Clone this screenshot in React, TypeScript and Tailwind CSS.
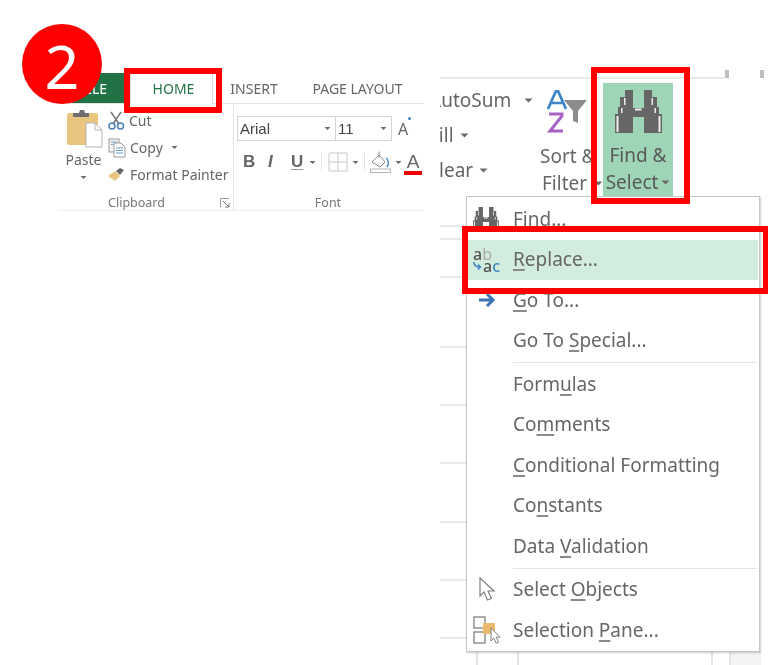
import React from "react";

const Caret = ({ className = "" }: { className?: string }) => (
  <svg width="9" height="5" viewBox="0 0 9 5" className={className}>
    <path d="M0.5 0.5h8L4.5 4.5z" fill="#6a6a6a" />
  </svg>
);

const Binoculars = ({ w, h }: { w: number; h: number }) => (
  <svg width={w} height={h} viewBox="0 0 47 43">
    <path d="M10 0H18V18H29V0H37V7H42V17H44V24H47V43H29V27H18V43H0V24H3V17H5V7H10Z" fill="#666" />
    <path d="M1.500 26h2v16h-2zM6 18h1.500v5H6zM9 8h1.500v7H9zM43.500 26h2v16h-2zM39.500 18h1.500v5h-1.500zM36.500 8h1.500v7h-1.500zM20 18.500h6.500v2H20z" fill="#eeeeee" />
  </svg>
);

const MenuRow = ({ icon, children, active }: { icon?: React.ReactNode; children: React.ReactNode; active?: boolean }) => (
  <div className={`flex h-[40.5px] items-center ${active ? "bg-[#d2ecde]" : ""}`}>
    <div className="flex w-[45px] shrink-0 items-center justify-start">{icon}</div>
    <span className="text-[19px] leading-none text-[#666666]">{children}</span>
  </div>
);

const Sep = () => <div className="ml-[45px] mr-[1px] my-[1px] h-[1px] bg-[#e3e3e3]" />;
const U = ({ children }: { children: React.ReactNode }) => (
  <span className="underline decoration-[#8a8a8a] decoration-[1.500px] underline-offset-[3px]">{children}</span>
);

export default function App() {
  return (
    <div
      className="relative h-[665px] w-[768px] overflow-hidden bg-white text-[#666666] blur-[0.4px]"
      style={{ fontFamily: '"Noto Sans", "Open Sans", sans-serif' }}
    >
      {/* sheet grid lines */}
      <svg className="absolute left-0 top-0" width="768" height="665" viewBox="0 0 768 665">
        <g stroke="#d4d4d4" strokeWidth="1.200">
          <path d="M440 78H725M440 226H470M440 239H470M440 277H470M440 347H470M440 405H470M440 463H470M440 522H470M440 580H470M440 638H470" />
          <path d="M477 650V665M518 650V665M712 650V665M730 650V665M747 650V665" />
        </g>
        <rect x="725" y="70" width="4" height="8" fill="#bdbdbd" />
        <rect x="760" y="70" width="4" height="8" fill="#bdbdbd" />
        <rect x="731" y="650" width="30" height="15" fill="#f3f3f3" />
      </svg>

      <div className="flex pt-[73px]">
        {/* left part of the ribbon */}
        <div className="ml-[58px] w-[366px] shrink-0">
          <div className="flex h-[31px] items-stretch border-b border-[#e4e4e4] pl-[14px] text-[14px]">
            <div className="flex w-[58px] items-center justify-start bg-[#217346] pl-[8px] text-white">FILE</div>
            <div className="mb-[-1px] flex w-[83px] items-center justify-center border-x border-[#dcdcdc] bg-white pl-[4px] text-[#217346]">HOME</div>
            <div className="flex w-[82px] items-center justify-center">INSERT</div>
            <div className="flex w-[110px] items-center justify-center whitespace-nowrap pl-[15px]">PAGE LAYOUT</div>
          </div>

          <div className="flex h-[107px] border-b border-[#eeeeee]">
            {/* Clipboard */}
            <div className="flex w-[176px] shrink-0 flex-col border-r border-[#e4e4e4]">
              <div className="flex flex-1">
                <div className="flex w-[50px] shrink-0 flex-col items-center pl-[1px] pt-[6px]">
                  <svg className="ml-[2px]" width="36" height="38" viewBox="0 0 36 38">
                    <rect x="0" y="3" width="31" height="32" rx="2" fill="#e9c57f" />
                    <path d="M6 3h6l1-3h4l1 3h4v4H6z" fill="#6e6e6e" />
                    <path d="M19 13h9l7 7v17H19z" fill="#fff" stroke="#b5b5b5" />
                    <path d="M28 13v7h7" fill="none" stroke="#b5b5b5" />
                  </svg>
                  <div className="mt-[2px] text-[14px] leading-[20px]">Paste</div>
                  <Caret className="mt-[5px] scale-75" />
                </div>
                <div className="flex flex-col gap-[6px] pt-[6px] text-[14px] leading-[21px]">
                  <div className="flex items-center gap-[4px]">
                    <svg width="17" height="19" viewBox="0 0 17 19">
                      <path d="M3 1l8 12M13 1L5 13" stroke="#777" strokeWidth="1.500" fill="none" />
                      <circle cx="4" cy="15" r="3" fill="none" stroke="#4a7fb8" strokeWidth="1.500" />
                      <circle cx="12.500" cy="15" r="3" fill="none" stroke="#4a7fb8" strokeWidth="1.500" />
                    </svg>
                    <span>Cut</span>
                  </div>
                  <div className="flex items-center gap-[4px]">
                    <svg width="18" height="20" viewBox="0 0 18 20">
                      <rect x="1" y="1" width="10" height="13" fill="#f5f5f5" stroke="#9a9a9a" />
                      <path d="M6 5h7l4 4v10H6z" fill="#fff" stroke="#9a9a9a" />
                      <path d="M3 4h6M3 6.500h2M8 10h7M8 12.500h7M8 15h7" stroke="#6f9bcb" />
                    </svg>
                    <span>Copy</span>
                    <Caret className="ml-[3px] scale-75" />
                  </div>
                  <div className="flex items-center gap-[5px] whitespace-nowrap">
                    <svg width="17" height="15" viewBox="0 0 17 15">
                      <path d="M0 9l7-5 5 5-5 5z" fill="#e9c57f" />
                      <path d="M8 4l4-3 4 2-4 5z" fill="#666" />
                    </svg>
                    <span>Format Painter</span>
                  </div>
                </div>
              </div>
              <div className="relative mb-[-2px] pr-[18px] text-center text-[12.500px] leading-[18px] text-[#777777]">
                Clipboard
                <svg className="absolute right-[3px] top-[4px]" width="10" height="10" viewBox="0 0 10 10">
                  <path d="M0.500 9V0.500H9" fill="none" stroke="#999" />
                  <path d="M3 3l5.500 5.500M5 9h4V5" fill="none" stroke="#777" />
                </svg>
              </div>
            </div>
            {/* Font */}
            <div className="flex flex-1 flex-col pl-[3px]">
              <div className="flex flex-1 flex-col pt-[12px]">
                <div className="flex items-center">
                  <div className="flex h-[25px] w-[99px] items-center justify-between border border-[#d4d4d4] pl-[2px] pr-[3px] text-[15px] text-[#444444]">
                    <span className="pt-[1px]" style={{ fontFamily: '"Liberation Sans", sans-serif' }}>Arial</span>
                    <Caret className="scale-75" />
                  </div>
                  <div className="flex h-[25px] w-[56px] items-center justify-between border border-l-0 border-[#d4d4d4] pl-[2px] pr-[3px] text-[15px] text-[#444444]">
                    <span className="pt-[1px]" style={{ fontFamily: '"Liberation Sans", sans-serif' }}>11</span>
                    <Caret className="scale-75" />
                  </div>
                  <span className="relative ml-[6px] text-[16px]">
                    A
                    <span className="absolute right-[-3px] top-[0px] h-[3px] w-[3px] rounded-full bg-[#4a7fb8]" />
                  </span>
                </div>
                <div className="mt-[9px] flex items-center pl-[6px] text-[17px] leading-[24px]">
                  <span className="w-[24px] font-bold" style={{ fontFamily: '"Liberation Sans", sans-serif' }}>B</span>
                  <span className="w-[24px] pl-[1px] font-bold italic" style={{ fontFamily: '"Liberation Sans", sans-serif' }}>I</span>
                  <span className="w-[17px] font-bold underline decoration-[#999] underline-offset-2" style={{ fontFamily: '"Liberation Sans", sans-serif' }}>U</span>
                  <Caret className="scale-75" />
                  <div className="ml-[4px] h-[18px] w-[1px] bg-[#e4e4e4]" />
                  <svg className="ml-[6px]" width="20" height="20" viewBox="0 0 20 20">
                    <path d="M1 1h18v18H1zM10 1v18M1 10h18" fill="none" stroke="#c9c9c9" />
                  </svg>
                  <Caret className="ml-[3px] scale-75" />
                  <div className="ml-[4px] h-[18px] w-[1px] bg-[#e4e4e4]" />
                  <svg className="ml-[5px]" width="22" height="22" viewBox="0 0 22 22">
                    <path d="M2 11l7-7 6 7-5 5z" fill="#fff" stroke="#888" />
                    <path d="M9 0.500v6" stroke="#888" />
                    <path d="M16 7c3 2 3 6 1 9" fill="none" stroke="#4a90c8" strokeWidth="1.500" />
                    <rect x="0.500" y="18" width="20" height="3.500" fill="#fff" stroke="#b5b5b5" />
                  </svg>
                  <Caret className="ml-[2px] scale-75" />
                  <span className="relative ml-[1px] w-[18px] text-center text-[19px]" style={{ fontFamily: '"Liberation Sans", sans-serif' }}>
                    A
                    <span className="absolute bottom-[-1px] left-0 h-[4px] w-[18px] bg-[#ee0000]" />
                  </span>
                </div>
              </div>
              <div className="mb-[-2px] mr-[5px] text-center text-[12.500px] leading-[18px] text-[#777777]">Font</div>
            </div>
          </div>
        </div>

        {/* right part of the ribbon */}
        <div className="ml-[16px] flex h-[123px] w-[328px] shrink-0 overflow-hidden pt-[10px]">
          <div className="w-[100px] shrink-0 overflow-hidden text-[19px] leading-[35px]">
            <div className="ml-[-11px] flex items-center whitespace-nowrap">AutoSum<Caret className="ml-[13px]" /></div>
            <div className="ml-[-11px] flex items-center">Fill<Caret className="ml-[6px]" /></div>
            <div className="ml-[-13px] flex items-center whitespace-nowrap">Clear<Caret className="ml-[6px]" /></div>
          </div>
          <div className="relative w-[63px] shrink-0 text-[19px] leading-[27px]">
            <svg className="mb-[7px] ml-[2px] mt-[7px]" width="46" height="46" viewBox="0 0 46 46">
              <path d="M6 19L14 1h2l8 18" fill="none" stroke="#3f86c8" strokeWidth="2.800" />
              <path d="M9 13h11" stroke="#3f86c8" strokeWidth="2.500" />
              <path d="M7 24h13v2L8 41h13" fill="none" stroke="#a463c4" strokeWidth="3" />
              <path d="M22 10h23l-9 11v12l-5-2V21z" fill="#8c8c8c" />
            </svg>
            <div className="whitespace-nowrap">Sort &amp;</div>
            <div className="ml-[2px] flex items-center whitespace-nowrap">Filter<Caret className="ml-[7px]" /></div>
          </div>
          <div className="flex h-[113px] w-[70px] shrink-0 flex-col items-center bg-[#9fd5b7] pt-[7px] text-[19px] leading-[27px] text-[#595959]">
            <div className="mb-[9px] leading-none"><Binoculars w={47} h={43} /></div>
            <div className="whitespace-nowrap">Find &amp;</div>
            <div className="flex items-center whitespace-nowrap">Select<Caret className="ml-[3px]" /></div>
          </div>
        </div>
      </div>

      {/* dropdown menu */}
      <div className="absolute left-[466px] top-[196px] w-[294px] border border-[#c6c6c6] bg-white pl-[1px] pr-[1px] pt-[2px] shadow-[1px_1px_2px_rgba(0,0,0,0.2)]">
        <MenuRow icon={<span className="ml-[5px] block"><Binoculars w={26} h={24} /></span>}>Find...</MenuRow>
        <MenuRow
          active
          icon={
            <span className="ml-[5px] block w-[28px] text-[16px] font-medium leading-[12px] text-[#555555]">
              <span className="block">a<span className="font-normal text-[#aaaaaa]">b</span></span>
              <span className="flex items-center">
                <svg className="mr-[1px]" width="9" height="9" viewBox="0 0 9 9">
                  <path d="M1 1c0 4 2 5 6 5M5 3.500L7.500 6 5 8.500" fill="none" stroke="#3f86c8" strokeWidth="1.500" />
                </svg>
                a<span className="text-[#3f86c8]">c</span>
              </span>
            </span>
          }
        >
          <U>R</U>eplace...
        </MenuRow>
        <MenuRow
          icon={
            <svg className="ml-[10px]" width="18" height="14" viewBox="0 0 18 14">
              <path d="M1 7h14M9 1l6 6-6 6" fill="none" stroke="#3b74b4" strokeWidth="3" />
            </svg>
          }
        >
          <U>G</U>o To...
        </MenuRow>
        <MenuRow>Go To <U>S</U>pecial...</MenuRow>
        <Sep />
        <MenuRow>Form<U>u</U>las</MenuRow>
        <MenuRow>Co<U>m</U>ments</MenuRow>
        <MenuRow><U>C</U>onditional Formatting</MenuRow>
        <MenuRow>Co<U>n</U>stants</MenuRow>
        <MenuRow>Data <U>V</U>alidation</MenuRow>
        <Sep />
        <MenuRow
          icon={
            <svg className="ml-[11px]" width="18" height="26" viewBox="0 0 18 26">
              <path d="M1 1v18l4-4 3.500 8 4-1.500-3.500-7.500h6z" fill="#fff" stroke="#808080" strokeWidth="1.200" />
            </svg>
          }
        >
          Select <U>O</U>bjects
        </MenuRow>
        <MenuRow
          icon={
            <svg className="ml-[5px]" width="28" height="28" viewBox="0 0 28 28">
              <rect x="1" y="1" width="11" height="11" fill="#fff" stroke="#808080" strokeWidth="1.300" />
              <rect x="1" y="16" width="11" height="11" fill="#fff" stroke="#808080" strokeWidth="1.300" />
              <rect x="10" y="7" width="12" height="11" fill="#e9b96e" />
              <path d="M18 12v13l2.800-2.800 2.400 5 2.400-1-2.400-5H27z" fill="#fff" stroke="#808080" />
            </svg>
          }
        >
          Selection <U>P</U>ane...
        </MenuRow>
      </div>

      {/* red highlight boxes */}
      <div className="absolute left-[124px] top-[68px] h-[45px] w-[98px] border-[6px] border-[#ff0000]" />
      <div className="absolute left-[591px] top-[67px] h-[137px] w-[99px] border-[6px] border-[#ff0000]" />
      <div className="absolute left-[462px] top-[226px] h-[68px] w-[306px] border-[6px] border-r-[5px] border-[#ff0000]" />

      {/* step badge */}
      <div className="absolute left-[22px] top-[24px] flex h-[80px] w-[80px] items-center justify-center rounded-full bg-[#ff0000] pt-[3px] text-[61px] font-normal leading-none text-white">
        2
      </div>
    </div>
  );
}
